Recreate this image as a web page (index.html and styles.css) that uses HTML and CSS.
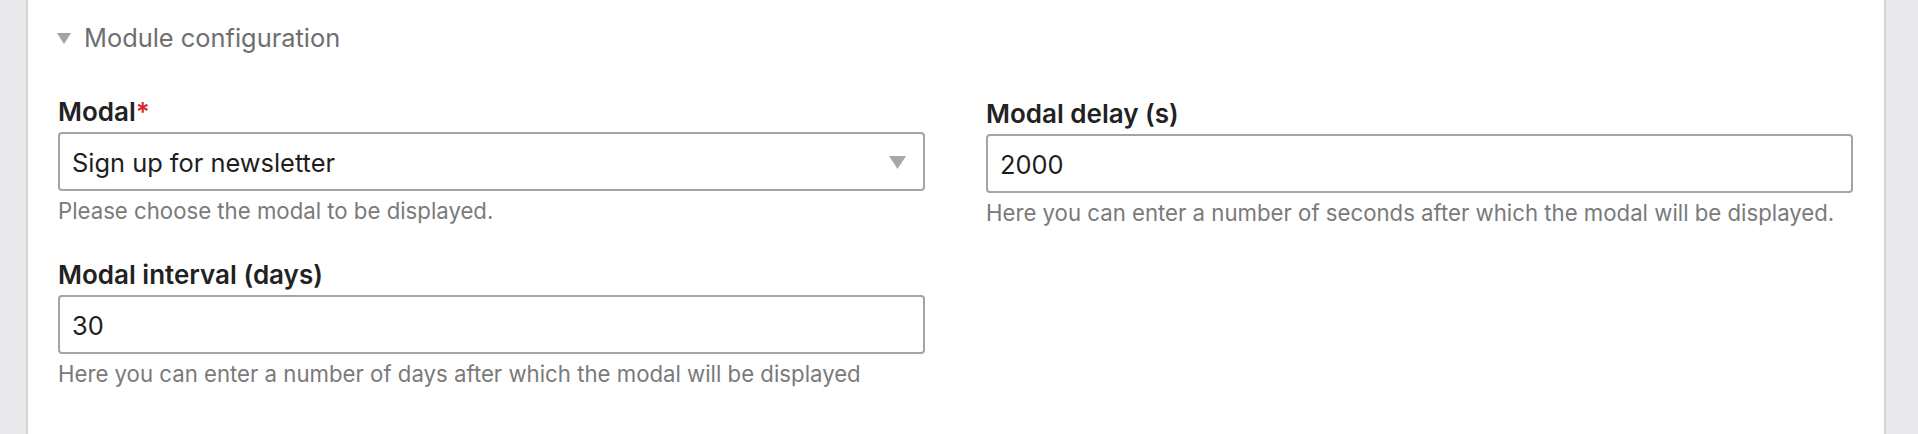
FILE: index.html
```html
<!DOCTYPE html>
<html lang="en">
<head>
<meta charset="utf-8">
<title>Module configuration</title>
<link rel="stylesheet" href="styles.css">
</head>
<body>
<div class="panel">
  <div class="summary">
    <svg class="caret" width="14" height="11" viewBox="0 0 14 11"><polygon points="0,0 14,0 7,11" fill="#a3a3a3"/></svg>
    <span>Module configuration</span>
  </div>
  <div class="fields">
    <div class="field">
      <label class="label">Modal<span class="req">*</span></label>
      <div class="control select">
        <span>Sign up for newsletter</span>
        <svg width="17" height="13" viewBox="0 0 17 13"><polygon points="0,0 17,0 8.5,13" fill="#a8a8a8"/></svg>
      </div>
      <div class="help">Please choose the modal to be displayed.</div>
    </div>
    <div class="field field-shifted">
      <label class="label">Modal delay (s)</label>
      <div class="control">2000</div>
      <div class="help">Here you can enter a number of seconds after which the modal will be displayed.</div>
    </div>
    <div class="field">
      <label class="label">Modal interval (days)</label>
      <div class="control">30</div>
      <div class="help">Here you can enter a number of days after which the modal will be displayed</div>
    </div>
  </div>
</div>
</body>
</html>
```
FILE: styles.css
```css
html, body {
  margin: 0;
  height: 100%;
}
body {
  background: #e9e9eb;
  display: flex;
  font-family: Inter, "Noto Sans", sans-serif;
}
.panel {
  flex: 1;
  margin: 0 32px 0 26px;
  background: #fff;
  border-left: 2px solid #d5d5d7;
  border-right: 2px solid #d5d5d7;
  padding: 0 31px 0 30px;
}
.summary {
  display: flex;
  align-items: center;
  gap: 13px;
  padding-top: 21px;
  margin-left: -1px;
  font-size: 25.4px;
  line-height: 34px;
  color: #6e6e6e;
}
.fields {
  display: grid;
  grid-template-columns: 1fr 1fr;
  column-gap: 61px;
  row-gap: 32px;
  margin-top: 41px;
}
.field {
  display: flex;
  flex-direction: column;
}
.field-shifted {
  padding-top: 2px;
}
.label {
  font-size: 26px;
  line-height: 32px;
  font-weight: 600;
  color: #222;
  margin-bottom: 4px;
}
.req {
  color: #d42a2a;
}
.control {
  box-sizing: border-box;
  height: 59px;
  border: 2px solid #a4a4a4;
  border-radius: 4px;
  padding: 1px 17px 0 12px;
  display: flex;
  align-items: center;
  font-size: 25.4px;
  color: #1e1e1e;
}
.select {
  justify-content: space-between;
}
.help {
  margin-top: 6px;
  font-size: 22.2px;
  line-height: 28px;
  color: #7a7a7a;
  white-space: nowrap;
}
```
